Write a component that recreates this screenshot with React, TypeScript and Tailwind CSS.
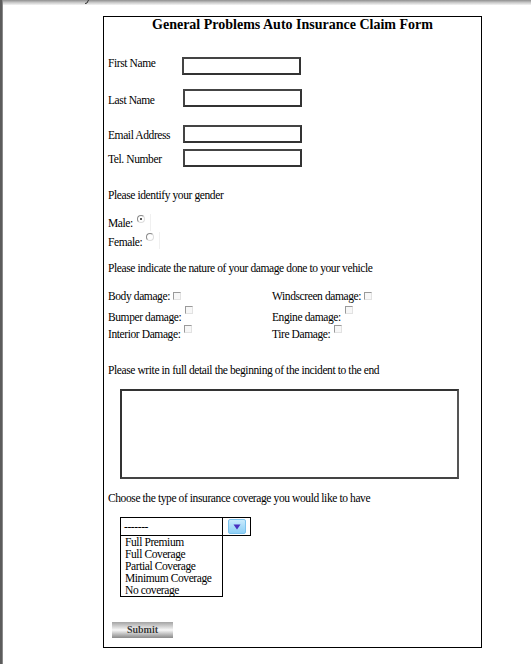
import React from "react";

const serif = { fontFamily: '"Liberation Serif", "Times New Roman", serif' };

function Check({ className = "" }: { className?: string }) {
  return (
    <span
      className={`inline-block w-[8px] h-[8px] shrink-0 border border-t-[#9a9a9a] border-l-[#9a9a9a] border-r-[#e2e2e2] border-b-[#e2e2e2] bg-[#f7f7f7] ${className}`}
    />
  );
}

function Radio({ checked, className = "" }: { checked?: boolean; className?: string }) {
  return (
    <span className={`flex w-[14px] h-[17px] border-r border-[#f0f0f0] ${className}`}>
      <span className="relative mt-[1px] w-[8px] h-[8px] rounded-full border border-t-[#8a8a8a] border-l-[#8a8a8a] border-r-[#dddddd] border-b-[#dddddd] bg-white">
        {checked && (
          <span className="absolute left-[2px] top-[2px] w-[2px] h-[2px] rounded-full bg-[#222]" />
        )}
      </span>
    </span>
  );
}

function TextBox({ className = "" }: { className?: string }) {
  return (
    <div
      className={`w-[119px] h-[18px] border-2 border-t-[#444] border-l-[#444] border-r-[#333] border-b-[#333] bg-white ${className}`}
    />
  );
}

export default function App() {
  return (
    <div className="w-[531px] h-[664px] bg-white flex overflow-hidden text-black" style={serif}>
      <div className="w-[3px] h-full bg-[#5c5c5c] border-r border-[#8a8a8a] shrink-0" />
      <div className="flex-1 flex flex-col">
        <div className="relative h-[5px] overflow-hidden bg-gradient-to-b from-[#8f8f8f] via-[#c8c8c8] to-[#f4f4f4]">
          <svg className="absolute left-[81px] top-0" width="6" height="4" viewBox="0 0 6 4">
            <path d="M4.5 0 L3 3 L1 3.5" stroke="#333" strokeWidth="1" fill="none" />
          </svg>
        </div>
        <div className="ml-[100px] mt-[11px] w-[379px] h-[632px] border border-black flex flex-col text-[11.5px] leading-[14px] tracking-[-0.4px]">
          <div className="mt-[-1px] h-[18px] leading-[18px] text-center text-[14px] tracking-normal font-bold">
            General Problems Auto Insurance Claim Form
          </div>

          <div className="mt-[23px] pl-[4px] flex items-start">
            <span className="w-[74px] mt-[-1px]">First Name</span>
            <TextBox />
          </div>
          <div className="mt-[14px] pl-[4px] flex items-start">
            <span className="w-[75px] mt-[4px]">Last Name</span>
            <TextBox />
          </div>
          <div className="mt-[18px] pl-[4px] flex items-start">
            <span className="w-[75px] mt-[3px]">Email Address</span>
            <TextBox />
          </div>
          <div className="mt-[6px] pl-[4px] flex items-start">
            <span className="w-[75px] mt-[3px]">Tel. Number</span>
            <TextBox />
          </div>

          <div className="mt-[21px] pl-[4px]">Please identify your gender</div>

          <div className="mt-[14px] pl-[4px] flex items-start h-[14px]">
            <span>Male:</span>
            <Radio checked className="ml-[4px] mt-[-2px]" />
          </div>
          <div className="mt-[5px] pl-[4px] flex items-start h-[14px]">
            <span>Female:</span>
            <Radio className="ml-[4px] mt-[-3px]" />
          </div>

          <div className="mt-[12px] pl-[4px]">Please indicate the nature of your damage done to your vehicle</div>

          <div className="mt-[14px] pl-[4px] flex h-[14px]">
            <div className="w-[164px] flex items-start">
              <span>Body damage:</span>
              <Check className="ml-[3px] mt-[3px]" />
            </div>
            <div className="flex items-start">
              <span>Windscreen damage:</span>
              <Check className="ml-[3px] mt-[3px]" />
            </div>
          </div>
          <div className="mt-[7px] pl-[4px] flex h-[14px]">
            <div className="w-[164px] flex items-start">
              <span>Bumper damage:</span>
              <Check className="ml-[4px] mt-[-4px]" />
            </div>
            <div className="flex items-start">
              <span>Engine damage:</span>
              <Check className="ml-[4px] mt-[-4px]" />
            </div>
          </div>
          <div className="mt-[3px] pl-[4px] flex h-[14px]">
            <div className="w-[164px] flex items-start">
              <span>Interior Damage:</span>
              <Check className="ml-[4px] mt-[-2px]" />
            </div>
            <div className="flex items-start">
              <span>Tire Damage:</span>
              <Check className="ml-[4px] mt-[-2px]" />
            </div>
          </div>

          <div className="mt-[22px] pl-[4px]">Please write in full detail the beginning of the incident to the end</div>

          <div className="mt-[12px] ml-[16px] w-[339px] h-[90px] border-2 border-t-[#333] border-l-[#333] border-r-[#555] border-b-[#444] bg-white" />

          <div className="mt-[12px] pl-[4px]">Choose the type of insurance coverage you would like to have</div>

          <div className="mt-[12px] ml-[16px] w-[131px] h-[19px] border border-black flex">
            <div className="w-[102px] h-full border-r border-black pl-[3px] leading-[16px]">-------</div>
            <div className="flex-1 flex items-center justify-center">
              <div className="w-[18px] h-[15px] rounded-[2px] border border-[#7cc3ee] bg-gradient-to-b from-[#c9ebfd] via-[#a9dcf9] to-[#8fd0f6] flex items-center justify-center">
                <svg width="8" height="6" viewBox="0 0 8 6">
                  <path d="M0.5 0.5 L7.5 0.5 L4 5.5 Z" fill="#4a2fc0" />
                </svg>
              </div>
            </div>
          </div>
          <div className="mt-[-1px] ml-[16px] w-[103px] border border-black pl-[4px] leading-[12px]">
            <div>Full Premium</div>
            <div>Full Coverage</div>
            <div>Partial Coverage</div>
            <div>Minimum Coverage</div>
            <div>No coverage</div>
          </div>

          <div className="mt-[25px] ml-[8px] w-[61px] h-[16px] bg-gradient-to-b from-[#a4a4a4] via-[#f8f8f8] to-[#8a8a8a] flex items-center justify-center text-[10px] leading-[10px] tracking-normal text-[#3a3a3a] font-semibold">
            Submit
          </div>
        </div>
      </div>
    </div>
  );
}
